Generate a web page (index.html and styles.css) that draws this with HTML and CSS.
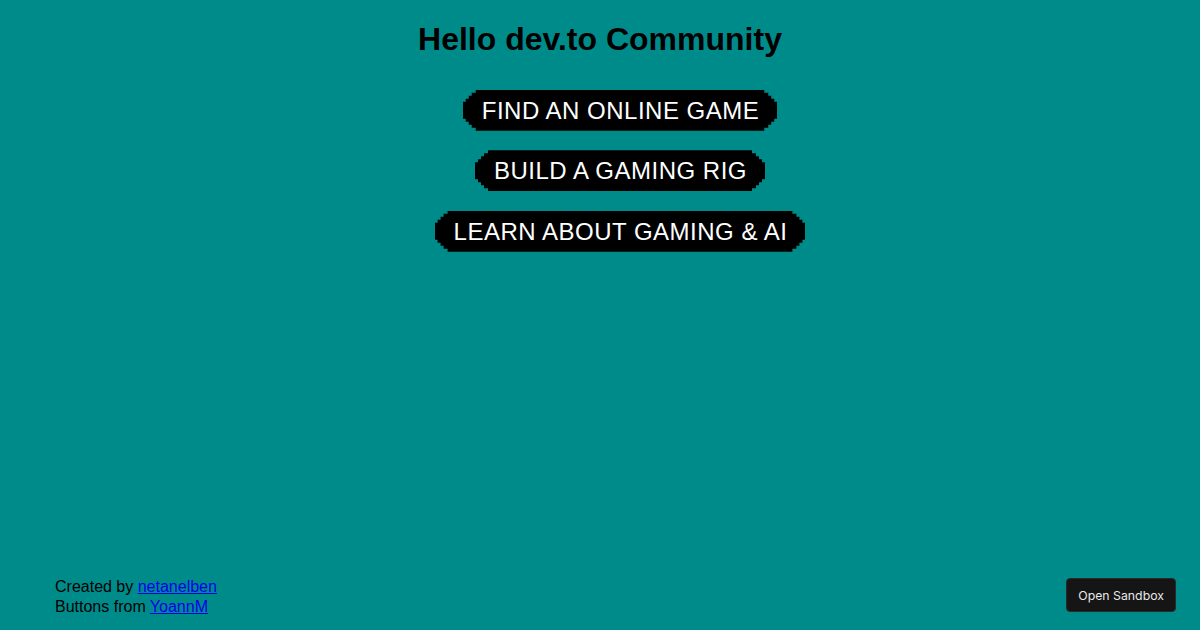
FILE: index.html
```html
<!DOCTYPE html>
<html lang="en">
<head>
<meta charset="utf-8">
<title>Hello dev.to Community</title>
<link rel="stylesheet" href="styles.css">
</head>
<body>
  <main class="page">
    <h1 class="title">Hello dev.to Community</h1>
    <ul class="menu">
      <li><a class="pixel-btn" href="#">FIND AN ONLINE GAME</a></li>
      <li><a class="pixel-btn" href="#">BUILD A GAMING RIG</a></li>
      <li><a class="pixel-btn" href="#">LEARN ABOUT GAMING &amp; AI</a></li>
    </ul>
  </main>
  <footer class="credits">
    <div>Created by <a href="#">netanelben</a></div>
    <div>Buttons from <a href="#">YoannM</a></div>
  </footer>
  <a class="sandbox-btn" href="#">Open Sandbox</a>
</body>
</html>
```

FILE: styles.css
```css
html, body {
  height: 100%;
}

body {
  margin: 0;
  background: #008b8b;
  font-family: "Liberation Sans", Arial, sans-serif;
  color: #000;
  position: relative;
  overflow: hidden;
}

.page {
  padding-top: 21px;
}

.title {
  margin: 0;
  font-size: 32px;
  line-height: 36.8px;
  font-weight: bold;
  text-align: center;
}

.menu {
  list-style: none;
  margin: 32px 0 0;
  padding: 0 0 0 40px;
  display: flex;
  flex-direction: column;
  align-items: center;
  gap: 19.5px;
}

.pixel-btn {
  display: block;
  background: #000;
  color: #fff;
  text-decoration: none;
  font-size: 24px;
  letter-spacing: 0.5px;
  line-height: 27px;
  padding: 7px 18px 7px 19px;
  clip-path: polygon(
    13px 0, calc(100% - 13px) 0,
    calc(100% - 13px) 3px, calc(100% - 9px) 3px,
    calc(100% - 9px) 6px, calc(100% - 6px) 6px,
    calc(100% - 6px) 9px, calc(100% - 3px) 9px,
    calc(100% - 3px) 12px, 100% 12px,
    100% calc(100% - 12px), calc(100% - 3px) calc(100% - 12px),
    calc(100% - 3px) calc(100% - 9px), calc(100% - 6px) calc(100% - 9px),
    calc(100% - 6px) calc(100% - 6px), calc(100% - 9px) calc(100% - 6px),
    calc(100% - 9px) calc(100% - 3px), calc(100% - 13px) calc(100% - 3px),
    calc(100% - 13px) 100%, 13px 100%,
    13px calc(100% - 3px), 9px calc(100% - 3px),
    9px calc(100% - 6px), 6px calc(100% - 6px),
    6px calc(100% - 9px), 3px calc(100% - 9px),
    3px calc(100% - 12px), 0 calc(100% - 12px),
    0 12px, 3px 12px,
    3px 9px, 6px 9px,
    6px 6px, 9px 6px,
    9px 3px, 13px 3px
  );
}

.credits {
  position: absolute;
  left: 55px;
  bottom: 13px;
  font-size: 16px;
  line-height: 20px;
}

.credits a {
  color: #0000ee;
  text-decoration: underline;
}

.sandbox-btn {
  position: fixed;
  right: 24px;
  bottom: 18px;
  height: 34px;
  box-sizing: border-box;
  padding: 0 11px;
  display: flex;
  align-items: center;
  background: #151515;
  border: 1px solid #2a2a2a;
  border-radius: 4px;
  color: #e8e8e8;
  font-family: Inter, "Liberation Sans", sans-serif;
  font-size: 12.3px;
  text-decoration: none;
}
```
